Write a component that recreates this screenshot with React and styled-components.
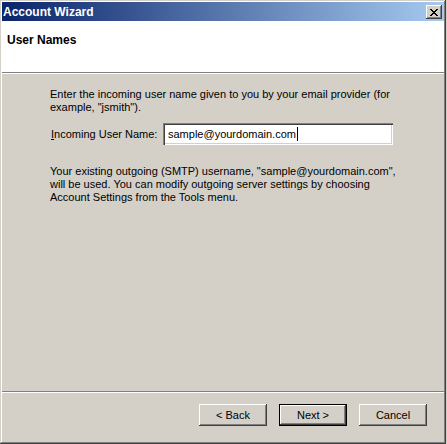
import React from "react";
import styled, { createGlobalStyle } from "styled-components";

const Global = createGlobalStyle`
  html, body { margin: 0; padding: 0; background: #d4d0c8; }
  body { font-family: "Liberation Sans", Arial, sans-serif; }
  * { box-sizing: border-box; }
`;

const Window = styled.div`
  width: 446px;
  height: 444px;
  padding: 2px 2px 3px 2px;
  background: #d4d0c8;
  box-shadow: inset -1px -1px #404040, inset 1px 1px #d4d0c8,
    inset -2px -2px #808080, inset 2px 2px #ffffff;
  display: flex;
  flex-direction: column;
`;

const TitleBar = styled.div`
  height: 19px;
  flex: none;
  display: flex;
  align-items: center;
  justify-content: space-between;
  padding: 0 2px 0 1px;
  background: linear-gradient(to right, #0a246a, #a6caf0);
`;

const Title = styled.span`
  color: #ffffff;
  font-weight: bold;
  font-size: 12px;
  line-height: 14px;
  padding-top: 1px;
`;

const CloseButton = styled.div`
  width: 16px;
  height: 14px;
  background: #d4d0c8;
  box-shadow: inset -1px -1px #404040, inset 1px 1px #ffffff,
    inset -2px -2px #808080;
  display: flex;
  align-items: center;
  justify-content: center;
  padding: 1px 1px 0 0;
`;

const Header = styled.div`
  height: 52px;
  flex: none;
  background: #ffffff;
  padding: 12px 0 0 5px;
  border-bottom: 1px solid #808080;
`;

const HeaderTitle = styled.div`
  font-weight: bold;
  font-size: 12px;
  line-height: 14px;
  color: #000;
`;

const Body = styled.div`
  flex: 1;
  border-top: 1px solid #ffffff;
  padding: 14px 0 0 48px;
  font-size: 11px;
  line-height: 13px;
  color: #000;
`;

const Para = styled.p`
  margin: ${(p) => p.$top || 0}px 0 0 0;
`;

const FieldRow = styled.div`
  display: flex;
  align-items: center;
  margin-top: 9px;
`;

const Label = styled.span`
  width: 113px;
  padding-left: 1px;
  flex: none;
`;

const Underline = styled.span`
  text-decoration: underline;
`;

const TextField = styled.div`
  width: 230px;
  height: 22px;
  background: #ffffff;
  box-shadow: inset 1px 1px #808080, inset 2px 2px #404040,
    inset -1px -1px #ffffff, inset -2px -2px #d4d0c8;
  padding: 0 3px 0 5px;
  display: flex;
  align-items: center;
  font-size: 11px;
`;

const Caret = styled.span`
  display: inline-block;
  width: 1px;
  height: 14px;
  background: #000;
  margin-left: 1px;
`;

const Footer = styled.div`
  flex: none;
  border-top: 1px solid #808080;
  box-shadow: inset 0 1px #ffffff;
  padding: 12px 17px 15px 0;
  display: flex;
  justify-content: flex-end;
  gap: 12px;
`;

const Button = styled.div`
  width: 68px;
  height: 22px;
  background: #d4d0c8;
  display: flex;
  align-items: center;
  justify-content: center;
  font-size: 11px;
  color: #000;
  box-shadow: ${(p) =>
    p.$default
      ? "inset 0 0 0 1px #000, inset -2px -2px #404040, inset 2px 2px #ffffff, inset -3px -3px #808080"
      : "inset -1px -1px #404040, inset 1px 1px #ffffff, inset -2px -2px #808080"};
`;

export default function App() {
  return (
    <>
      <Global />
      <Window>
        <TitleBar>
          <Title>Account Wizard</Title>
          <CloseButton>
            <svg width="8" height="7" viewBox="0 0 8 7" shapeRendering="crispEdges">
              <path
                d="M0 0h2v1H0zM6 0h2v1H6zM1 1h2v1H1zM5 1h2v1H5zM2 2h4v1H2zM3 3h2v1H3zM2 4h4v1H2zM1 5h2v1H1zM5 5h2v1H5zM0 6h2v1H0zM6 6h2v1H6z"
                fill="#000"
              />
            </svg>
          </CloseButton>
        </TitleBar>
        <Header>
          <HeaderTitle>User Names</HeaderTitle>
        </Header>
        <Body>
          <Para>
            Enter the incoming user name given to you by your email provider (for
            <br />
            example, "jsmith").
          </Para>
          <FieldRow>
            <Label>
              <Underline>I</Underline>ncoming User Name:
            </Label>
            <TextField>
              sample@yourdomain.com
              <Caret />
            </TextField>
          </FieldRow>
          <Para $top={20}>
            Your existing outgoing (SMTP) username, "sample@yourdomain.com",
            <br />
            will be used. You can modify outgoing server settings by choosing
            <br />
            Account Settings from the Tools menu.
          </Para>
        </Body>
        <Footer>
          <Button>&lt; Back</Button>
          <Button $default>Next &gt;</Button>
          <Button>Cancel</Button>
        </Footer>
      </Window>
    </>
  );
}
